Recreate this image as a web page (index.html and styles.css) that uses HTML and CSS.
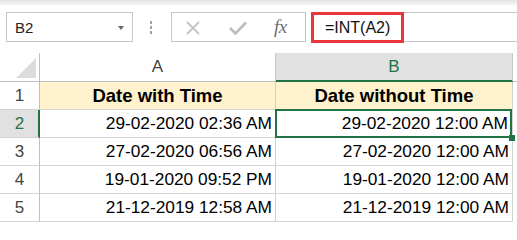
FILE: index.html
```html
<!DOCTYPE html>
<html>
<head>
<meta charset="utf-8">
<link rel="stylesheet" href="styles.css">
</head>
<body>
<div class="topband"></div>
<div class="toolbar">
  <div class="namebox">
    <span class="namebox-text">B2</span>
    <span class="namebox-arrow"></span>
  </div>
  <div class="dots"><i></i><i></i><i></i></div>
  <div class="fxbox">
    <svg class="icon-x" width="16" height="14" viewBox="0 0 16 14"><path d="M2 1 L14 13 M14 1 L2 13" stroke="#c4c4c4" stroke-width="1.8" fill="none"/></svg>
    <svg class="icon-check" width="18" height="14" viewBox="0 0 18 14"><path d="M1 7 L6.5 12.5 L17 1.5" stroke="#bdbdbd" stroke-width="2.6" fill="none"/></svg>
    <span class="fx">fx</span>
  </div>
  <div class="input">
    <span class="formula">=INT(A2)</span>
  </div>
</div>
<div class="sheet">
  <div class="corner"><svg width="20" height="20" viewBox="0 0 20 20"><path d="M20 0 L20 20 L0 20 Z" fill="#dcdcdc"/></svg></div>
  <div class="colhead">A</div>
  <div class="colhead sel">B</div>
  <div class="rest head"></div>

  <div class="rowhead">1</div>
  <div class="cell title">Date with Time</div>
  <div class="cell title">Date without Time</div>
  <div class="rest"></div>

  <div class="rowhead sel">2</div>
  <div class="cell">29-02-2020 02:36 AM</div>
  <div class="cell active">29-02-2020 12:00 AM<span class="handle"></span></div>
  <div class="rest"></div>

  <div class="rowhead">3</div>
  <div class="cell">27-02-2020 06:56 AM</div>
  <div class="cell">27-02-2020 12:00 AM</div>
  <div class="rest"></div>

  <div class="rowhead">4</div>
  <div class="cell">19-01-2020 09:52 PM</div>
  <div class="cell">19-01-2020 12:00 AM</div>
  <div class="rest"></div>

  <div class="rowhead">5</div>
  <div class="cell">21-12-2019 12:58 AM</div>
  <div class="cell">21-12-2019 12:00 AM</div>
  <div class="rest"></div>
</div>
</body>
</html>
```
FILE: styles.css
```css
* { box-sizing: border-box; }
html, body { margin: 0; padding: 0; background: #fff; overflow: hidden; }
body { font-family: "Liberation Sans", Arial, sans-serif; width: 517px; height: 223px; }

.topband { height: 5px; background: linear-gradient(#e4e4e4, #f6f6f6); }

.toolbar {
  display: flex;
  align-items: flex-start;
  padding-top: 7px;
  height: 48px;
}

.namebox {
  margin-left: 6px;
  width: 127px;
  height: 30px;
  border: 1px solid #c6c6c6;
  display: flex;
  align-items: center;
  justify-content: space-between;
  padding: 0 8px 0 8px;
}
.namebox-text { font-size: 15px; color: #222; }
.namebox-arrow {
  width: 0; height: 0;
  border-left: 3.5px solid transparent;
  border-right: 3.5px solid transparent;
  border-top: 4px solid #666;
  margin-top: 1px;
}

.dots {
  margin-left: 17px;
  height: 30px;
  display: flex;
  flex-direction: column;
  justify-content: center;
  gap: 2px;
}
.dots i { display: block; width: 2px; height: 3px; background: #a0a0a0; }

.fxbox {
  margin-left: 19px;
  width: 135px;
  height: 30px;
  border: 1px solid #c6c6c6;
  display: flex;
  align-items: center;
  padding-left: 13px;
}
.icon-x { margin-top: 1px; }
.icon-check { margin-left: 28px; margin-top: 1px; }
.fx {
  margin-left: 27px;
  font-family: "Liberation Serif", "Times New Roman", serif;
  font-style: italic;
  font-size: 19px;
  color: #6f6f6f;
  letter-spacing: -0.5px;
}

.input {
  margin-left: 5px;
  flex: 1;
  height: 30px;
  border-top: 1px solid #c6c6c6;
  border-bottom: 1px solid #c6c6c6;
  display: flex;
}
.formula {
  margin-top: -1px;
  width: 93px;
  height: 31px;
  border: 3px solid #e8363c;
  font-size: 16px;
  color: #111;
  display: flex;
  align-items: center;
  padding-left: 11px;
}

.sheet {
  display: grid;
  grid-template-columns: 40px 236px 237px 1fr;
  grid-template-rows: 29px repeat(5, 28px);
}

.corner {
  border-right: 1px solid #c0c0c0;
  border-bottom: 1px solid #c0c0c0;
  padding: 5px 0 0 16px;
}
.corner svg { display: block; }

.colhead {
  border-right: 1px solid #c8c8c8;
  border-bottom: 1px solid #c0c0c0;
  display: flex;
  align-items: center;
  justify-content: center;
  font-size: 17px;
  color: #444;
}
.colhead.sel {
  background: #e1e1e1;
  color: #217346;
  border-bottom: 2px solid #217346;
  padding-top: 1px;
}
.rest.head { border-bottom: 1px solid #c0c0c0; }

.rowhead {
  border-right: 1px solid #c0c0c0;
  border-bottom: 1px solid #d4d4d4;
  display: flex;
  align-items: center;
  justify-content: center;
  font-size: 17px;
  color: #444;
}
.rowhead.sel {
  background: #e1e1e1;
  color: #217346;
  border-right: 2px solid #217346;
  padding-left: 1px;
}

.cell {
  position: relative;
  border-right: 1px solid #d0d0d0;
  border-bottom: 1px solid #d4d4d4;
  display: flex;
  align-items: center;
  justify-content: flex-end;
  padding-right: 3px;
  font-size: 17.3px;
  color: #000;
  white-space: nowrap;
}
.cell.title {
  background: #fff2cc;
  justify-content: center;
  padding-right: 0;
  font-weight: bold;
  font-size: 18.5px;
}
.cell.active { padding-right: 4px; }
.cell.active::after {
  content: "";
  position: absolute;
  top: -1px; left: -1px; right: 0; bottom: -1px;
  border: 2px solid #217346;
}
.handle {
  position: absolute;
  right: -3px;
  bottom: -4px;
  width: 6px;
  height: 6px;
  background: #217346;
  z-index: 2;
}
.rest { border-bottom: 0; }
```
